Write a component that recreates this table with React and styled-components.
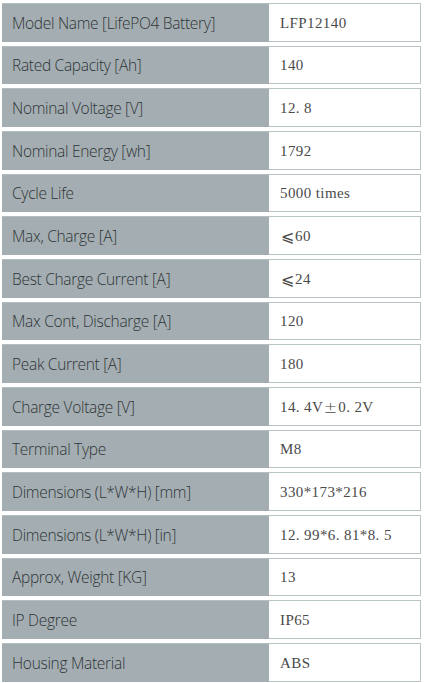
import React from 'react';
import styled, { createGlobalStyle } from 'styled-components';

const GlobalStyle = createGlobalStyle`
    html, body {
        margin: 0;
        padding: 0;
        background: #fff;
    }
`;

const specs = [
    ['Model Name [LifePO4 Battery]', 'LFP12140'],
    ['Rated Capacity [Ah]', '140'],
    ['Nominal Voltage [V]', '12. 8'],
    ['Nominal Energy [wh]', '1792'],
    ['Cycle Life', '5000 times'],
    ['Max, Charge [A]', '\u2A7D60'],
    ['Best Charge Current [A]', '\u2A7D24'],
    ['Max Cont, Discharge [A]', '120'],
    ['Peak Current [A]', '180'],
    ['Charge Voltage [V]', '14. 4V\u00B10. 2V'],
    ['Terminal Type', 'M8'],
    ['Dimensions (L*W*H) [mm]', '330*173*216'],
    ['Dimensions (L*W*H) [in]', '12. 99*6. 81*8. 5'],
    ['Approx, Weight [KG]', '13'],
    ['IP Degree', 'IP65'],
    ['Housing Material', 'ABS'],
];

const Table = styled.div`
    display: flex;
    flex-direction: column;
    gap: 4px;
    padding: 3px 4px 0 2px;
`;

const Row = styled.div`
    display: grid;
    grid-template-columns: 267px 1fr;
    height: 38.67px;
`;

const Label = styled.div`
    display: flex;
    align-items: center;
    padding-left: 10px;
    background: #a4aeb2;
    border-top: 1px solid #b4bdc0;
    color: #2f3436;
    font-family: "Open Sans", "Noto Sans", sans-serif;
    font-size: 15.5px;
    font-weight: 300;
    letter-spacing: -0.3px;
`;

const Value = styled.div`
    display: flex;
    align-items: center;
    padding: 2px 0 0 11px;
    background: #fff;
    border: 1.5px solid #b9c3c6;
    border-left: none;
    color: #4a4a4a;
    font-family: "Liberation Serif", "DejaVu Serif", "Noto Sans CJK SC", serif;
    font-size: 15px;
    font-weight: 400;
    letter-spacing: 0.4px;
    white-space: pre;
`;

// full-width maths signs (≤, ±) as in the source sheet
const Sign = styled.span`
    display: inline-block;
    width: 15px;
    font-family: "DejaVu Sans", sans-serif;
    font-size: 16px;
    font-weight: 300;
    text-align: center;
`;

const renderValue = value =>
    value.split(/([\u2A7D\u00B1])/).map((part, i) =>
        i % 2 ? <Sign key={i}>{part}</Sign> : part
    );

const App = () => (
    <React.Fragment>
        <GlobalStyle />
        <Table>
            {specs.map(([label, value]) => (
                <Row key={label}>
                    <Label>{label}</Label>
                    <Value>{renderValue(value)}</Value>
                </Row>
            ))}
        </Table>
    </React.Fragment>
);

export default App;
